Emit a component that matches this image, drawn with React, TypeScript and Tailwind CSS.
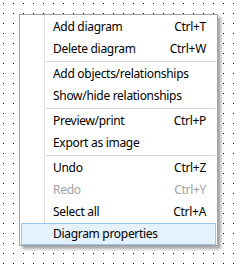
type Entry =
  | { kind: 'item'; label: string; shortcut?: string; disabled?: boolean; active?: boolean }
  | { kind: 'sep' };

const entries: Entry[] = [
  { kind: 'item', label: 'Add diagram', shortcut: 'Ctrl+T' },
  { kind: 'item', label: 'Delete diagram', shortcut: 'Ctrl+W' },
  { kind: 'sep' },
  { kind: 'item', label: 'Add objects/relationships' },
  { kind: 'item', label: 'Show/hide relationships' },
  { kind: 'sep' },
  { kind: 'item', label: 'Preview/print', shortcut: 'Ctrl+P' },
  { kind: 'item', label: 'Export as image' },
  { kind: 'sep' },
  { kind: 'item', label: 'Undo', shortcut: 'Ctrl+Z' },
  { kind: 'item', label: 'Redo', shortcut: 'Ctrl+Y', disabled: true },
  { kind: 'item', label: 'Select all', shortcut: 'Ctrl+A' },
  { kind: 'item', label: 'Diagram properties', active: true },
];

export default function App() {
  return (
    <div className="w-[240px] h-[266px] bg-white bg-[conic-gradient(at_1px_1px,transparent_75%,#000_0)] bg-size-[10px_10px] bg-position-[3px_3px] pl-[19px] pt-[14px] font-['Noto_Sans','Open_Sans',sans-serif] text-[12px] tracking-[-0.3px] text-black">
      {/* context menu */}
      <div className="w-[199px] border border-[#a0a0a0] bg-white bg-[linear-gradient(to_right,transparent_24px,#e2e2e2_24px,#e2e2e2_25px,transparent_25px)] pt-[1px] shadow-[3px_3px_3px_0_rgba(0,0,0,0.35)]">
        {entries.map((e, i) =>
          e.kind === 'sep' ? (
            <div key={i} className="h-[3px] flex items-center pl-[26px] pr-[2px]">
              <div className="h-px w-full bg-[#d7d7d7]" />
            </div>
          ) : (
            <div
              key={i}
              className={`mx-[1px] h-[22px] flex items-center justify-between pl-[32px] pr-[9px] border ${
                e.active ? 'bg-[#e5f1fb] border-[#99c9f3]' : 'border-transparent'
              } ${e.disabled ? 'text-[#a0a0a0]' : ''}`}
            >
              <span className="-ml-px">{e.label}</span>
              {e.shortcut && <span>{e.shortcut}</span>}
            </div>
          )
        )}
      </div>
    </div>
  );
}
